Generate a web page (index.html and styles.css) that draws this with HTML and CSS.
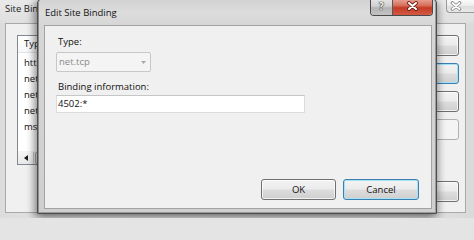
FILE: index.html
```html
<!DOCTYPE html>
<html>
<head>
<meta charset="utf-8">
<title>Edit Site Binding</title>
<link rel="stylesheet" href="styles.css">
</head>
<body>
<div class="screen">
  <div class="bgwin">
    <div class="bg-title">
      <span class="bg-title-text">Site Bindings</span>
      <div class="bg-close">
        <svg width="12" height="10" viewBox="0 0 12 10"><path d="M2.5 2 L9.5 8 M9.5 2 L2.5 8" stroke="#8c8c8c" stroke-width="3.6" stroke-linecap="round"/><path d="M2.5 2 L9.5 8 M9.5 2 L2.5 8" stroke="#ffffff" stroke-width="1.8" stroke-linecap="round"/></svg>
      </div>
    </div>
    <div class="bg-body">
      <div class="listview">
        <div class="lv-head">
          <span class="col c1">Type</span><span class="col c2">Host Name</span><span class="col c3">Port</span><span class="col c4">IP Address</span><span class="col c5">Binding Information</span>
        </div>
        <div class="lv-rows">
          <div class="lv-row"><span class="col c1">http</span><span class="col c2"></span><span class="col c3">80</span><span class="col c4">*</span><span class="col c5"></span></div>
          <div class="lv-row"><span class="col c1">net.tcp</span><span class="col c2"></span><span class="col c3"></span><span class="col c4"></span><span class="col c5">808:*</span></div>
          <div class="lv-row"><span class="col c1">net.pipe</span><span class="col c2"></span><span class="col c3"></span><span class="col c4"></span><span class="col c5">*</span></div>
          <div class="lv-row"><span class="col c1">net.msmq</span><span class="col c2"></span><span class="col c3"></span><span class="col c4"></span><span class="col c5">localhost</span></div>
          <div class="lv-row"><span class="col c1">msmq.formatname</span><span class="col c2"></span><span class="col c3"></span><span class="col c4"></span><span class="col c5">localhost</span></div>
        </div>
        <div class="hscroll">
          <div class="sb-arrow"><svg width="4" height="6" viewBox="0 0 4 6"><path d="M4 0 L0 3 L4 6 Z" fill="#1a1a1a"/></svg></div>
          <div class="sb-thumb"></div>
        </div>
      </div>
      <div class="bg-buttons">
        <button class="btn">Add...</button>
        <button class="btn btn-default">Edit...</button>
        <button class="btn">Remove</button>
        <button class="btn" disabled>Browse</button>
        <button class="btn btn-bottom">Close</button>
      </div>
    </div>
  </div>

  <div class="dlg">
    <div class="dlg-title">
      <span class="dlg-title-text">Edit Site Binding</span>
      <div class="caption-btns">
        <div class="cap-help">?</div>
        <div class="cap-close">
          <svg width="13" height="10" viewBox="0 0 13 10"><path d="M3 2 L10 8 M10 2 L3 8" stroke="#6b2418" stroke-width="3.8" stroke-linecap="round"/><path d="M3 2 L10 8 M10 2 L3 8" stroke="#ffffff" stroke-width="2" stroke-linecap="round"/></svg>
        </div>
      </div>
    </div>
    <div class="dlg-body">
      <label class="fld-label">Type:</label>
      <div class="combo">
        <span class="combo-text">net.tcp</span>
        <svg class="combo-arrow" width="5" height="3" viewBox="0 0 5 3"><path d="M0 0 L5 0 L2.5 3 Z" fill="#a8a8a8"/></svg>
      </div>
      <label class="fld-label second">Binding information:</label>
      <div class="textbox">4502:*</div>
      <div class="dlg-actions">
        <button class="btn">OK</button>
        <button class="btn btn-default">Cancel</button>
      </div>
    </div>
  </div>
</div>
</body>
</html>
```

FILE: styles.css
```css
* { box-sizing: border-box; }

html, body {
  margin: 0;
  padding: 0;
  width: 474px;
  height: 218px;
  overflow: hidden;
  background: #e4e4e4;
  font-family: "Open Sans", "Noto Sans", sans-serif;
  font-size: 9.5px;
  color: #111;
}

.screen {
  position: relative;
  width: 474px;
  height: 218px;
  overflow: hidden;
}

/* ---------- background window ---------- */
.bgwin {
  width: 474px;
  height: 218px;
  display: flex;
  flex-direction: column;
  background: linear-gradient(90deg, #dcdcdc 0%, #e6e6e6 20%, #e4e4e4 80%, #dadada 100%);
}

.bg-title {
  height: 23px;
  display: flex;
  align-items: flex-start;
  background: linear-gradient(#e9e9e9, #dfdfdf);
}

.bg-title-text {
  padding: 2px 0 0 5px;
  line-height: 14px;
  color: #1a1a1a;
}

.bg-close {
  margin-left: auto;
  width: 28px;
  height: 13px;
  border: 1px solid #9a9a9a;
  border-top: none;
  border-right: none;
  border-radius: 0 0 0 4px;
  background: linear-gradient(#fbfbfb, #ececec 50%, #dedede 51%, #e8e8e8);
  display: flex;
  align-items: center;
  padding-left: 3px;
}

.bg-body {
  flex: 1;
  margin: 0 8px 5px 5px;
  border: 1px solid #a9a9a9;
  background: #f0f0f0;
  display: flex;
  padding: 11px 6px 10px 11px;
}

.listview {
  flex: 1;
  height: 130px;
  border: 1px solid #828790;
  background: #fff;
  display: flex;
  flex-direction: column;
  overflow: hidden;
}

.lv-head {
  height: 17px;
  display: flex;
  border-bottom: 1px solid #e5e5e5;
  background: linear-gradient(#ffffff, #f7f8f9);
  line-height: 16px;
}

.lv-head .col { border-right: 1px solid #e5e5e5; }

.col {
  padding-left: 6px;
  white-space: nowrap;
  overflow: hidden;
}
.c1 { width: 100px; }
.c2 { width: 60px; }
.c3 { width: 36px; }
.c4 { width: 60px; }
.c5 { flex: 1; }

.lv-rows {
  flex: 1;
  padding-top: 2px;
}

.lv-row {
  height: 16px;
  line-height: 16px;
  display: flex;
}

.hscroll {
  height: 13px;
  background: #eaeaea;
  border-top: 1px solid #f4f4f4;
  display: flex;
}

.sb-arrow {
  width: 16px;
  display: flex;
  align-items: center;
  justify-content: center;
  background: linear-gradient(#f6f6f6, #e8e8e8);
  border-right: 1px solid #c8c8c8;
}

.sb-thumb {
  width: 200px;
  margin-left: 1px;
  border: 1px solid #a8a8a8;
  border-radius: 2px;
  background: linear-gradient(#f3f3f3, #e2e2e2);
}

.bg-buttons {
  width: 96px;
  margin-left: 8px;
  display: flex;
  flex-direction: column;
  gap: 7px;
}

.btn-bottom { margin-top: auto; }

/* ---------- buttons ---------- */
.btn {
  height: 21px;
  border: 1px solid #707070;
  border-radius: 3px;
  background: linear-gradient(#f3f3f3 0%, #ebebeb 48%, #dddddd 52%, #cfcfcf 100%);
  box-shadow: inset 0 0 0 1px rgba(255,255,255,0.7);
  font-family: inherit;
  font-size: 9.5px;
  color: #111;
  padding: 0;
  line-height: 18px;
}

.btn-default {
  border-color: #3c7fb1;
  box-shadow: inset 0 0 0 1px #a6e2f6;
}

.btn:disabled {
  border-color: #adb2b5;
  background: #f4f4f4;
  box-shadow: none;
  color: #a0a0a0;
}

/* ---------- dialog ---------- */
.dlg {
  position: absolute;
  left: 37px;
  top: -2px;
  width: 400px;
  height: 216px;
  border: 1px solid #4d4d4d;
  border-radius: 5px 5px 0 0;
  background: linear-gradient(#d2d2d2 0px, #dcdcdc 14px, #d6d6d6 27px, #cfcfcf 100%);
  box-shadow: inset 1px 0 0 #8c8c8c, inset -1px 0 0 #9a9a9a, inset 0 -1px 0 #9a9a9a, -4px 3px 7px rgba(0,0,0,0.35), 3px 3px 6px rgba(0,0,0,0.25);
  padding: 0 4px 4px 6px;
  display: flex;
  flex-direction: column;
}

.dlg-title {
  height: 26px;
  display: flex;
  align-items: flex-start;
  margin-right: -1px;
}

.dlg-title-text {
  padding: 7px 0 0 1px;
  line-height: 14px;
  color: #111;
}

.caption-btns {
  margin-left: auto;
  display: flex;
  height: 17px;
  border: 1px solid #4a4a4a;
  border-top: none;
  border-radius: 0 0 4px 4px;
  overflow: hidden;
}

.cap-help {
  width: 22px;
  border-right: 1px solid #5a5a5a;
  background: linear-gradient(#e6e6e6 0%, #cfcfcf 45%, #b4b4b4 55%, #c4c4c4 100%);
  color: #f4f4f4;
  font-weight: bold;
  font-size: 10px;
  line-height: 15px;
  text-align: center;
  text-shadow: 0 0 1px #333, 0 0 1px #333, 0 0 1px #333;
}

.cap-close {
  width: 39px;
  background: linear-gradient(#e8a597 0%, #d7705d 40%, #c43b25 55%, #d45a44 100%);
  display: flex;
  align-items: center;
  justify-content: center;
  padding-bottom: 2px;
}

.dlg-body {
  flex: 1;
  border: 1px solid #a3a3a3;
  background: #f0f0f0;
  display: flex;
  flex-direction: column;
  align-items: flex-start;
  padding: 9px 12px 8px 11px;
}

.fld-label {
  line-height: 14px;
  margin: 0 0 3px 2px;
  color: #111;
}

.fld-label.second {
  margin-top: 8px;
  margin-bottom: 1px;
}

.combo {
  width: 95px;
  height: 20px;
  border: 1px solid #c7c7c7;
  border-radius: 2px;
  background: #f4f4f4;
  display: flex;
  align-items: center;
  padding: 0 4px 0 2px;
}

.combo-text {
  color: #8a8a8a;
  line-height: 14px;
}

.combo-arrow { margin-left: auto; }

.textbox {
  width: 249px;
  height: 18px;
  border: 1px solid #dcdcdc;
  border-top-color: #c6c6c6;
  background: #ffffff;
  padding-left: 1px;
  line-height: 15px;
  color: #111;
}

.dlg-actions {
  margin-top: auto;
  align-self: flex-end;
  display: flex;
  gap: 7px;
}

.dlg-actions .btn { width: 75px; }
.dlg-actions .btn-default { width: 76px; }
```
